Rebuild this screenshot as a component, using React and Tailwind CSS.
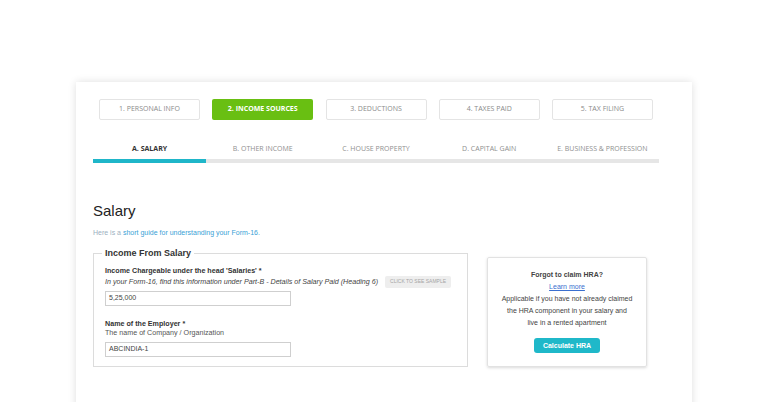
const steps = ['1. Personal Info', '2. Income Sources', '3. Deductions', '4. Taxes Paid', '5. Tax Filing']
const tabs = ['A. Salary', 'B. Other Income', 'C. House Property', 'D. Capital Gain', 'E. Business & Profession']

const sans = { fontFamily: '"Liberation Sans", Arial, sans-serif' }

export default function App() {
  return (
    <div className="h-[402px] w-[768px] overflow-hidden bg-white" style={sans}>
      <div className="ml-[76px] mt-[82px] h-[330px] w-[616px] bg-white pl-[17px] pr-[33px] pt-[17px] shadow-[0_0_8px_rgba(0,0,0,0.13)]">
        {/* steps */}
        <div className="flex justify-between px-[6px] font-['Open_Sans',sans-serif]">
          {steps.map((s, i) => (
            <div
              key={s}
              className={`flex h-[21px] w-[101px] items-center justify-center rounded-[2px] text-[7px] uppercase ${
                i === 1
                  ? 'bg-[#69bf12] font-bold text-white'
                  : 'border border-[#e4e4e4] text-[#8a8a8a]'
              }`}
            >
              {s}
            </div>
          ))}
        </div>

        {/* sub tabs */}
        <div className="mt-[21px] grid grid-cols-5 font-['Open_Sans',sans-serif]">
          {tabs.map((t, i) => (
            <div key={t} className="flex flex-col">
              <div
                className={`text-center text-[7px] uppercase leading-[16px] ${
                  i === 0 ? 'font-bold text-[#333]' : 'text-[#8f8f8f]'
                }`}
              >
                {t}
              </div>
              <div className={`mt-[2px] h-[4px] ${i === 0 ? 'bg-[#1fb6c9]' : 'bg-[#e6e6e6]'}`} />
            </div>
          ))}
        </div>

        <h1 className="mt-[39px] text-[15px] leading-[18px] text-[#222]">Salary</h1>
        <p className="mt-[8px] text-[7px] leading-[10px] text-[#9bb0c0]">
          Here is a <span className="text-[#3a9fd6]">short guide for understanding your Form-16.</span>
        </p>

        <div className="mt-[9px] flex items-start gap-[19px]">
          <fieldset className="w-[375px] border border-[#dcdcdc] pb-[9px] pl-[11px]">
            <legend className="-ml-[3px] px-[3px] text-[9px] font-bold leading-[12px] text-[#333]">
              Income From Salary
            </legend>
            <div className="mt-[7px] text-[7.15px] font-bold leading-[10px] text-[#333]">
              Income Chargeable under the head 'Salaries' *
            </div>
            <div className="flex items-center">
              <span className="text-[7.15px] italic leading-[10px] text-[#444]">
                In your Form-16, find this information under Part-B - Details of Salary Paid (Heading 6)
              </span>
              <span className="ml-[7px] flex h-[12px] items-center rounded-[2px] bg-[#eeeeee] px-[5px] text-[5px] uppercase text-[#a5a5a5]">
                Click to see sample
              </span>
            </div>
            <div className="mt-[3px] flex h-[15px] w-[186px] items-center border border-[#cfcfcf] px-[3px] text-[7px] text-[#444]">
              5,25,000
            </div>

            <div className="mt-[14px] text-[7.15px] font-bold leading-[9px] text-[#333]">Name of the Employer *</div>
            <div className="text-[7.15px] leading-[9px] text-[#555]">The name of Company / Organization</div>
            <div className="mt-[4px] flex h-[15px] w-[186px] items-center border border-[#cfcfcf] px-[3px] text-[7px] text-[#444]">
              ABCINDIA-1
            </div>
          </fieldset>

          <div className="mt-[10px] flex w-[160px] flex-col items-center rounded-[2px] border border-[#e2e2e2] pb-[13px] pt-[11px] text-center text-[7px] leading-[12px] text-[#444] shadow-[0_1px_3px_rgba(0,0,0,0.15)]">
            <div className="font-bold">Forgot to claim HRA?</div>
            <div className="text-[#3a6fcf] underline">Learn more</div>
            <div>Applicable if you have not already claimed</div>
            <div>the HRA component in your salary and</div>
            <div>live in a rented apartment</div>
            <div className="mt-[9px] flex h-[15px] w-[66px] items-center justify-center rounded-[3px] bg-[#1fb8c9] font-bold text-white">
              Calculate HRA
            </div>
          </div>
        </div>
      </div>
    </div>
  )
}
